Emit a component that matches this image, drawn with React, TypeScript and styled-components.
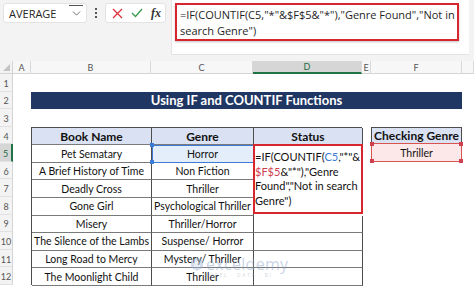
import React from "react";
import styled, { createGlobalStyle, css } from "styled-components";
import { ChevronDown } from "lucide-react";

const GlobalStyle = createGlobalStyle`
  html, body {
    margin: 0;
    padding: 0;
    background: #ffffff;
  }
  body {
    width: 474px;
    height: 292px;
    overflow: hidden;
    font-family: Lato, "Open Sans", sans-serif;
  }
`;

const ROW_H = 17.58;

const Window = styled.div`
  position: relative;
  width: 474px;
  height: 292px;
  display: flex;
  flex-direction: column;
  background: #ffffff;
  overflow: hidden;
`;

/* ---------- formula bar ---------- */

const FormulaBar = styled.div`
  height: 61px;
  flex: none;
  display: flex;
  align-items: flex-start;
  padding-left: 3px;
  background: #f3f3f3;
  box-sizing: border-box;
`;

const NameBox = styled.div`
  margin-top: 3px;
  width: 84px;
  height: 20px;
  box-sizing: border-box;
  display: flex;
  align-items: center;
  justify-content: space-between;
  padding: 0 3px 0 5px;
  background: #ffffff;
  border: 1px solid #e3e3e3;
  border-radius: 3px;
  font-family: "Open Sans", sans-serif;
  font-size: 11px;
  color: #262626;
  position: relative;
`;

const Caret = styled.span`
  position: absolute;
  right: 3px;
  top: 1px;
  width: 14px;
  height: 1px;
  background: #555;
`;

const Dots = styled.div`
  margin: 8px 0 0 8px;
  width: 3px;
  display: flex;
  flex-direction: column;
  gap: 2px;
  span {
    width: 2px;
    height: 2px;
    background: #555;
  }
`;

const FxBox = styled.div`
  margin: 3px 0 0 7px;
  width: 61px;
  height: 20px;
  box-sizing: border-box;
  display: flex;
  align-items: center;
  justify-content: space-between;
  padding: 0 4px 0 6px;
  background: #ffffff;
  border: 1px solid #e3e3e3;
  border-radius: 3px;
`;

const Fx = styled.span`
  font-family: "Liberation Serif", serif;
  font-style: italic;
  font-weight: bold;
  font-size: 12px;
  color: #333;
`;

const FormulaBox = styled.div`
  margin-left: 5px;
  width: 298px;
  height: 55px;
  box-sizing: border-box;
  padding: 3px 0 0 3px;
  background: #ffffff;
  border-left: 1px solid #e3e3e3;
  border-bottom: 1px solid #e3e3e3;
`;

const FormulaHighlight = styled.div`
  width: 284px;
  height: 38px;
  box-sizing: border-box;
  border: 2px solid #d7262e;
  box-shadow: 0 1px 2px rgba(0, 0, 0, 0.25);
  padding: 2px 0 0 3px;
  font-family: "Open Sans", sans-serif;
  font-size: 11px;
  line-height: 16px;
  color: #1f1f1f;
  white-space: nowrap;
`;

/* ---------- sheet ---------- */

const Sheet = styled.div`
  flex: 1;
  display: grid;
  grid-template-columns: 13px 18px 120px 102px 109px 9px 91px 1fr;
  grid-template-rows: 13px repeat(12, ${ROW_H}px) 1fr;
  font-family: Lato, "Open Sans", sans-serif;
`;

const Corner = styled.div`
  background: #f3f3f3;
  border-bottom: 1px solid #d4d4d4;
  border-right: 1px solid #d4d4d4;
  box-sizing: border-box;
  position: relative;
  &::after {
    content: "";
    position: absolute;
    right: 2px;
    bottom: 2px;
    border-left: 7px solid transparent;
    border-bottom: 7px solid #c4c4c4;
  }
`;

const ColHead = styled.div<{ $active?: boolean }>`
  display: flex;
  align-items: center;
  justify-content: center;
  box-sizing: border-box;
  font-size: 9px;
  color: #555;
  background: #f7f7f7;
  border-right: 1px solid #d9d9d9;
  border-bottom: 1px solid #d4d4d4;
  ${(p) =>
    p.$active &&
    css`
      background: #d6d6d6;
      color: #1e6b41;
      border-bottom: 2px solid #217346;
    `}
`;

const RowHead = styled.div<{ $active?: boolean }>`
  display: flex;
  align-items: center;
  justify-content: center;
  padding-top: 2px;
  box-sizing: border-box;
  font-size: 9px;
  color: #555;
  background: #f3f3f3;
  border-right: 1px solid #d4d4d4;
  border-bottom: 1px solid #e1e1e1;
  ${(p) =>
    p.$active &&
    css`
      background: #d6d6d6;
      color: #1e6b41;
      border-right: 2px solid #217346;
    `}
`;

const Title = styled.div`
  grid-column: 3 / 8;
  grid-row: 3;
  display: flex;
  align-items: center;
  justify-content: center;
  background: #203764;
  color: #ffffff;
  font-weight: bold;
  font-size: 13px;
`;

const Table = styled.div`
  grid-column: 3 / 6;
  grid-row: 5 / 14;
  display: grid;
  grid-template-columns: 120px 102px 109px;
  grid-auto-rows: ${ROW_H}px;
  border-top: 1px solid #4d4d4d;
  border-left: 1px solid #4d4d4d;
  position: relative;
`;

const Cell = styled.div<{ $head?: boolean; $ref?: boolean }>`
  position: relative;
  display: flex;
  align-items: center;
  justify-content: center;
  box-sizing: border-box;
  border-right: 1px solid #4d4d4d;
  border-bottom: 1px solid #7a7a7a;
  font-size: 10.5px;
  color: #111;
  white-space: nowrap;
  background: ${(p) => (p.$head ? "#d9e1f2" : "#ffffff")};
  font-weight: ${(p) => (p.$head ? "bold" : "normal")};
  ${(p) => p.$head && css`font-size: 12px;`}
  ${(p) =>
    p.$ref &&
    css`
      background: #e4eefa;
      outline: 1px solid #3e7bd6;
      outline-offset: -1px;
      z-index: 1;
    `}
`;

const Handle = styled.span<{ $c: string; $x: "l" | "r"; $y: "t" | "b" }>`
  position: absolute;
  width: 4px;
  height: 4px;
  background: ${(p) => p.$c};
  ${(p) => (p.$x === "l" ? "left: -2px;" : "right: -2px;")}
  ${(p) => (p.$y === "t" ? "top: -2px;" : "bottom: -2px;")}
`;

const Editor = styled.div`
  grid-row: span 4;
  margin: -1px 0 2px -1px;
  z-index: 2;
  background: #ffffff;
  border: 2px solid #d7262e;
  padding: 4px 0 0 0;
  font-size: 11px;
  line-height: 14.4px;
  color: #111;
  white-space: nowrap;
`;

const RefC = styled.span`
  color: #3e7bd6;
`;

const RefF = styled.span`
  color: #d0404f;
`;

const CheckHead = styled.div`
  grid-column: 7;
  grid-row: 5;
  display: flex;
  align-items: center;
  justify-content: center;
  border: 1px solid #4d4d4d;
  background: #d9e1f2;
  font-weight: bold;
  font-size: 12px;
  color: #111;
  white-space: nowrap;
`;

const CheckValue = styled.div`
  grid-column: 7;
  grid-row: 6;
  position: relative;
  display: flex;
  align-items: center;
  justify-content: center;
  border: 1px solid #d9534f;
  background: #fce8e8;
  font-size: 10.5px;
  color: #111;
  margin-top: -1px;
`;

/* ---------- watermark ---------- */

const Watermark = styled.div`
  position: absolute;
  left: 190px;
  top: 256px;
  display: flex;
  align-items: flex-start;
  gap: 2px;
  opacity: 0.45;
  pointer-events: none;
`;

const MarkText = styled.div`
  display: flex;
  flex-direction: column;
  line-height: 1;
`;

const MarkName = styled.span`
  font-family: "Open Sans", sans-serif;
  font-size: 16px;
  color: #8aa3c8;
  letter-spacing: 0.3px;
`;

const MarkTag = styled.span`
  margin-top: 1px;
  font-family: "Open Sans", sans-serif;
  font-size: 5px;
  letter-spacing: 1.6px;
  color: #9aa8bb;
`;

const books: [string, string][] = [
  ["Pet Sematary", "Horror"],
  ["A Brief History of Time", "Non Fiction"],
  ["Deadly Cross", "Thriller"],
  ["Gone Girl", "Psychological Thriller"],
  ["Misery", "Thriller/Horror"],
  ["The Silence of the Lambs", "Suspense/ Horror"],
  ["Long Road to Mercy", "Mystery/ Thriller"],
  ["The Moonlight Child", "Thriller"],
];

const columns = ["A", "B", "C", "D", "E", "F", ""];

export default function App() {
  return (
    <Window>
      <GlobalStyle />
      <FormulaBar>
        <NameBox>
          AVERAGE
          <Caret />
          <ChevronDown size={13} strokeWidth={1.4} color="#444" />
        </NameBox>
        <Dots>
          <span />
          <span />
          <span />
        </Dots>
        <FxBox>
          <svg width="11" height="11" viewBox="0 0 11 11">
            <path d="M1 1 L10 10 M10 1 L1 10" stroke="#e0303a" strokeWidth="1.3" fill="none" />
          </svg>
          <svg width="12" height="10" viewBox="0 0 12 10">
            <path d="M1 5 L4.5 8.5 L11 1" stroke="#3a9a4d" strokeWidth="1.3" fill="none" />
          </svg>
          <Fx>fx</Fx>
        </FxBox>
        <FormulaBox>
          <FormulaHighlight>
            =IF(COUNTIF(C5,"*"&amp;$F$5&amp;"*"),"Genre Found","Not in
            <br />
            search Genre")
          </FormulaHighlight>
        </FormulaBox>
      </FormulaBar>

      <Sheet>
        <Corner />
        {columns.map((c, i) => (
          <ColHead key={i} $active={c === "D"}>
            {c}
          </ColHead>
        ))}
        {Array.from({ length: 12 }, (_, i) => (
          <RowHead key={i} style={{ gridColumn: 1, gridRow: i + 2 }} $active={i === 4}>
            {i + 1}
          </RowHead>
        ))}

        <Title>Using IF and COUNTIF Functions</Title>

        <Table>
          <Cell $head>Book Name</Cell>
          <Cell $head>Genre</Cell>
          <Cell $head>Status</Cell>
          {books.map(([name, genre], i) => (
            <React.Fragment key={name}>
              <Cell>{name}</Cell>
              <Cell $ref={i === 0}>
                {genre}
                {i === 0 && (
                  <>
                    <Handle $c="#3e7bd6" $x="l" $y="t" />
                    <Handle $c="#3e7bd6" $x="l" $y="b" />
                  </>
                )}
              </Cell>
              {i === 0 && (
                <Editor>
                  =IF(COUNTIF(<RefC>C5</RefC>,"*"&amp;
                  <br />
                  <RefF>$F$5</RefF>&amp;"*"),"Genre
                  <br />
                  Found","Not in search
                  <br />
                  Genre")
                </Editor>
              )}
              {i > 3 && <Cell />}
            </React.Fragment>
          ))}
        </Table>

        <CheckHead>Checking Genre</CheckHead>
        <CheckValue>
          Thriller
          <Handle $c="#d0404f" $x="l" $y="t" />
          <Handle $c="#d0404f" $x="r" $y="t" />
          <Handle $c="#d0404f" $x="l" $y="b" />
          <Handle $c="#d0404f" $x="r" $y="b" />
        </CheckValue>
      </Sheet>

      <Watermark>
        <svg width="14" height="16" viewBox="0 0 14 16">
          <path d="M7 1 L13 4.5 L13 11.5 L7 15 L1 11.5 L1 4.5 Z" fill="#9fb5d6" />
          <path d="M4 6 L10 6 M4 8 L9 8 M4 10 L10 10" stroke="#ffffff" strokeWidth="1.2" />
        </svg>
        <MarkText>
          <MarkName>exceldemy</MarkName>
          <MarkTag>EXCEL · DATA · BI</MarkTag>
        </MarkText>
      </Watermark>
    </Window>
  );
}
